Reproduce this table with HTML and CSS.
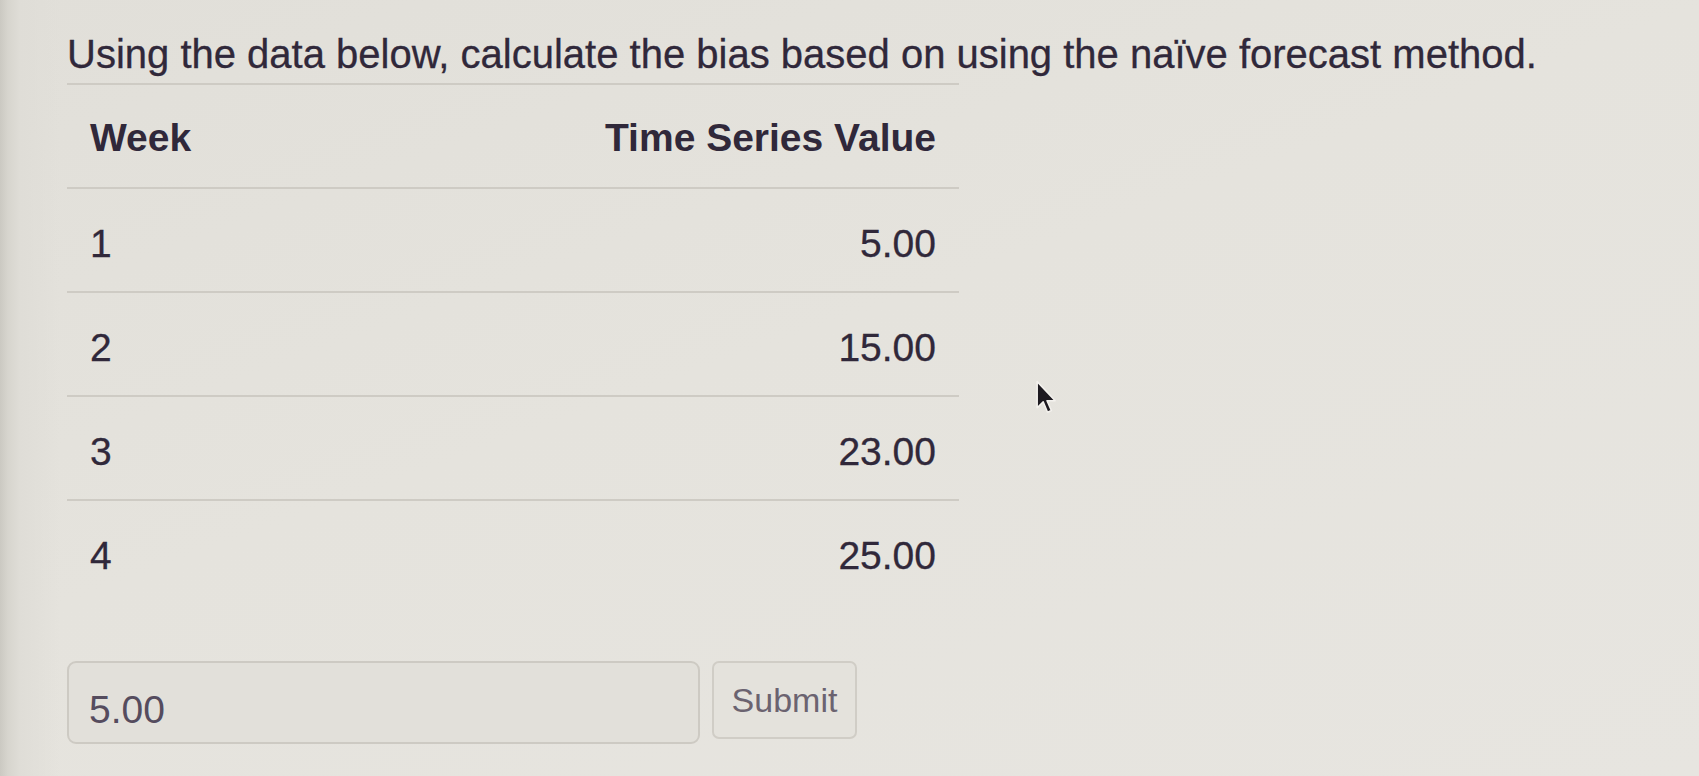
FILE: index.html
```html
<!DOCTYPE html>
<html lang="en">
<head>
<meta charset="utf-8">
<title>Bias question</title>
<link rel="stylesheet" href="styles.css">
</head>
<body>
<main class="question">
  <p class="prompt">Using the data below, calculate the bias based on using the naïve forecast method.</p>
  <table class="data">
    <thead>
      <tr><th class="col-week">Week</th><th class="col-value">Time Series Value</th></tr>
    </thead>
    <tbody>
      <tr><td>1</td><td class="num">5.00</td></tr>
      <tr><td>2</td><td class="num">15.00</td></tr>
      <tr><td>3</td><td class="num">23.00</td></tr>
      <tr><td>4</td><td class="num">25.00</td></tr>
    </tbody>
  </table>
  <form class="answer" onsubmit="return false">
    <input class="answer-input" type="text" value="5.00">
    <button class="submit" type="button">Submit</button>
  </form>
</main>
<svg class="cursor" width="24" height="36" viewBox="0 0 22 32" aria-hidden="true">
  <path d="M2 1 L2 25 L7.5 19.5 L11.5 29 L15 27.5 L11 18.5 L18.5 18.5 Z" fill="#1d1a20" stroke="#f4f2ee" stroke-width="1.4" stroke-linejoin="round"/>
</svg>
</body>
</html>
```
FILE: styles.css
```css
html, body {
  margin: 0;
  padding: 0;
}

body {
  width: 1699px;
  height: 776px;
  overflow: hidden;
  position: relative;
  font-family: "Liberation Sans", Arial, sans-serif;
  color: #30283a;
  background:
    linear-gradient(90deg, #cbc9c2 0px, #d7d5ce 8px, #dfddd7 20px, rgba(0,0,0,0) 60px),
    linear-gradient(160deg, #e1dfd9 0%, #e5e3dd 45%, #e7e5e0 100%);
}

.question {
  padding: 30px 0 0 67px;
}

.prompt {
  margin: 0 0 5px 0;
  font-size: 40px;
  line-height: 48px;
  white-space: nowrap;
  -webkit-text-stroke: 0.3px #30283a;
}

.data {
  width: 892px;
  border-collapse: collapse;
  font-size: 39px;
}

.data th,
.data td {
  padding: 32px 23px 24px 23px;
  line-height: 46px;
  border-top: 2px solid #cecbc4;
  text-align: left;
}

.data th {
  padding-top: 30px;
  padding-bottom: 26px;
  font-weight: bold;
}

.data td {
  -webkit-text-stroke: 0.3px #30283a;
}

.data thead th {
  border-bottom: 2px solid #cecbc4;
}

.data .col-value,
.data .num {
  text-align: right;
}

.answer {
  display: flex;
  align-items: flex-start;
  gap: 12px;
  margin-top: 58px;
}

.answer-input {
  box-sizing: border-box;
  width: 633px;
  height: 83px;
  padding: 14px 20px 0 20px;
  font-family: "Liberation Sans", Arial, sans-serif;
  font-size: 39px;
  color: #554c5e;
  background: #e2e0da;
  border: 2px solid #cdcac3;
  border-radius: 9px;
  outline: none;
}

.submit {
  box-sizing: border-box;
  width: 145px;
  height: 78px;
  padding: 0;
  font-family: "Liberation Sans", Arial, sans-serif;
  font-size: 34px;
  color: #6b6370;
  background: #e4e2dc;
  border: 2px solid #d0cdc6;
  border-radius: 7px;
}

.cursor {
  position: absolute;
  left: 1035px;
  top: 380px;
}
```
